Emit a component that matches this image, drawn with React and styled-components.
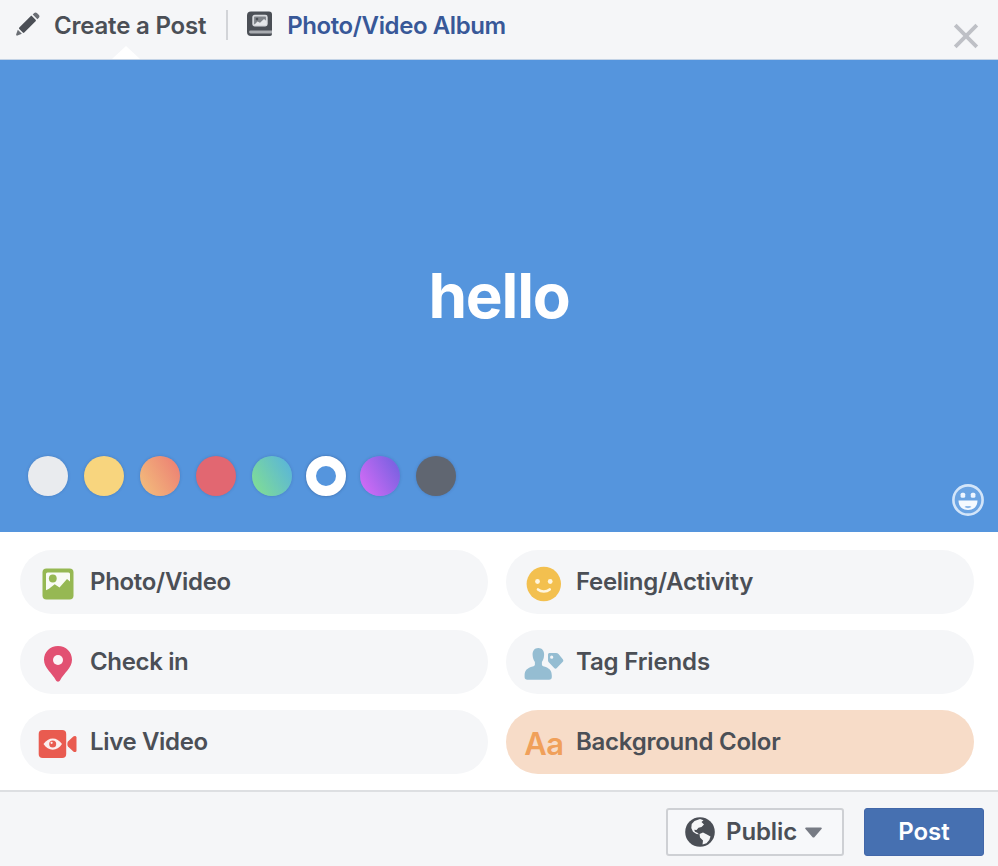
import React, { useState } from "react";
import styled, { createGlobalStyle } from "styled-components";

const GlobalStyle = createGlobalStyle`
  * {
    box-sizing: border-box;
  }

  body {
    margin: 0;
    background: #fff;
    font-family: Inter, "Liberation Sans", sans-serif;
    color: #4b4f56;
  }

  button {
    font: inherit;
    color: inherit;
    padding: 0;
    border: 0;
    background: none;
    cursor: pointer;
  }

  svg {
    display: block;
    flex: none;
  }
`;

const Composer = styled.div`
  width: 998px;
  height: 866px;
  display: flex;
  flex-direction: column;
  overflow: hidden;
`;

const Header = styled.header`
  height: 60px;
  flex: none;
  display: flex;
  align-items: flex-start;
  padding: 0 19px 0 15px;
  background: #f5f6f8;
  border-bottom: 1px solid #c3d3e6;
`;

const Tab = styled.button`
  position: relative;
  height: 59px;
  display: flex;
  align-items: flex-start;
  gap: ${(props) => props.$gap}px;
  color: ${(props) => (props.$active ? "#4b4f56" : "#385898")};

  svg {
    margin-top: 11px;
  }
`;

const Label = styled.span`
  font-size: 24px;
  line-height: 30px;
  font-weight: 600;
  letter-spacing: ${(props) => props.$spacing || 0}px;
  white-space: nowrap;
`;

const TabLabel = styled(Label)`
  margin-top: 11px;
`;

const Notch = styled.span`
  position: absolute;
  left: 97px;
  bottom: 0;
  border: solid transparent;
  border-width: 0 14px 13px;
  border-bottom-color: #fff;
`;

const Divider = styled.div`
  width: 2px;
  height: 30px;
  margin: 10px 19px 0 20px;
  background: #d2d4d8;
`;

const Close = styled.button`
  margin: 23px 0 0 auto;
`;

const Canvas = styled.main`
  height: 472px;
  flex: none;
  display: flex;
  flex-direction: column;
  justify-content: space-between;
  background: #5595dd;
`;

const Message = styled.div`
  padding-top: 196px;
  text-align: center;
  color: #fff;
  font-size: 62px;
  line-height: 80px;
  font-weight: 700;
  letter-spacing: -1.2px;
`;

const CanvasTools = styled.div`
  display: flex;
  justify-content: space-between;
  align-items: flex-end;
  padding: 0 13px 15px 28px;
`;

const Swatches = styled.div`
  display: flex;
  gap: 16px;
  padding-bottom: 21px;
`;

const Swatch = styled.button`
  width: 40px;
  height: 40px;
  border-radius: 50%;
  margin: ${(props) => (props.$selected ? "0 -2px" : "0")};
  border: ${(props) => (props.$selected ? "10px solid #fff" : "0")};
  background: ${(props) => props.$fill};
  box-shadow: 0 0 3px rgba(40, 70, 120, ${(props) => (props.$selected ? 0.6 : 0.3)});
`;

const Options = styled.section`
  flex: 1;
  display: grid;
  grid-template-columns: 468px 468px;
  grid-auto-rows: 64px;
  gap: 16px 18px;
  padding: 18px 20px 0;
`;

const Option = styled.button`
  display: flex;
  align-items: center;
  border-radius: 32px;
  padding-left: 18px;
  background: ${(props) => (props.$active ? "#f7dcc8" : "#f5f6f8")};
`;

const OptionIcon = styled.span`
  width: 40px;
  height: 40px;
  margin: 3px 12px 0 0;
  display: flex;
  justify-content: center;
  align-items: center;
`;

const Letters = styled.span`
  color: #f0a05a;
  font-size: 31px;
  line-height: 36px;
  font-weight: 600;
  letter-spacing: -0.5px;
`;

const Footer = styled.footer`
  height: 76px;
  flex: none;
  display: flex;
  justify-content: flex-end;
  gap: 20px;
  padding: 16px 14px 0;
  background: #f5f6f8;
  border-top: 2px solid #dddfe2;
`;

const Audience = styled.button`
  width: 178px;
  height: 48px;
  display: flex;
  align-items: center;
  padding-left: 17px;
  background: #f7f8fa;
  border: 2px solid #ced0d4;
  border-radius: 3px;

  ${Label} {
    margin: 0 8px 0 11px;
  }
`;

const Submit = styled.button`
  width: 120px;
  height: 48px;
  color: #fff;
  background: #4670b1;
  border: 1px solid #4267a9;
  border-radius: 3px;
`;

const PencilIcon = () => (
  <svg width="26" height="26" viewBox="0 0 26 26" fill="#4b4f56">
    <path d="M4.300 16.500 15.600 5.200c.5-.5 1-.5 1.500 0l3.500 3.500c.5.500.5 1 0 1.500L9.300 21.500c-.5.500-1 .5-1.500 0L4.300 18c-.5-.5-.5-1 0-1.500z" />
    <path d="m17.700 3.600 1.500-1.500c.8-.8 1.900-.8 2.700 0l2 2c.8.800.8 1.900 0 2.700l-1.500 1.500z" fill="#6b6f75" />
    <path d="M2.800 18.700 6.900 22.800 2.500 24.600c-.9.3-1.600-.4-1.300-1.300z" fill="#6b6f75" />
  </svg>
);

const AlbumIcon = () => (
  <svg width="26" height="26" viewBox="0 0 26 26">
    <path d="M4 .5h18a3 3 0 0 1 3 3V23a2 2 0 0 1-2 2H4a4 4 0 0 1-4-4V4.500a4 4 0 0 1 4-4z" fill="#4b4f56" />
    <path d="M3.500 19.500H25v2.900H3.500a1.450 1.450 0 0 1 0-2.900z" fill="#a9acb1" />
    <rect x="6.200" y="4.700" width="13.600" height="9.800" rx="1.500" fill="#7e8288" stroke="#d7d9dd" strokeWidth="1.800" />
    <path d="m7 13.900 3.500-3.400 2.500 1.200 4-3.700 2.500 2v3.900z" fill="#e4e6e9" />
    <circle cx="10" cy="8.100" r="1.300" fill="#4b4f56" />
  </svg>
);

const CloseIcon = () => (
  <svg width="26" height="26" viewBox="0 0 26 26">
    <path d="m2.200 2.200 21.600 21.600M23.800 2.200 2.200 23.800" stroke="#bec0c6" strokeWidth="3.800" />
  </svg>
);

const EmojiIcon = () => (
  <svg width="34" height="34" viewBox="0 0 34 34">
    <circle cx="17" cy="17" r="14.600" fill="#6ba4e3" stroke="#d3e5f9" strokeWidth="2.600" />
    <rect x="9.600" y="9.800" width="4.600" height="5" rx="1.500" fill="#edf5ff" />
    <rect x="19.800" y="9.800" width="4.600" height="5" rx="1.500" fill="#edf5ff" />
    <path d="M7.500 17.500h19c0 5.700-3.700 9.500-9.500 9.500s-9.500-3.800-9.500-9.500z" fill="#f5faff" />
    <path d="M13.500 24c1-1.200 2.300-1.400 3.500-.7 1.200-.7 2.500-.5 3.500.7-2.100 1.500-4.900 1.500-7 0z" fill="#8bb7e9" />
  </svg>
);

const PhotoIcon = () => (
  <svg width="32" height="32" viewBox="0 0 32 32">
    <rect x=".5" y=".5" width="31" height="31" rx="4" fill="#96b853" />
    <path d="M5.500 4.500h21a1.500 1.500 0 0 1 1.500 1.500v7.500l-3-2.500-7.500 8.500-4.800-3.300L7 20.700l-3 1.500V6a1.500 1.500 0 0 1 1.500-1.500z" fill="#f9fbf5" />
    <circle cx="10.800" cy="10.500" r="3.900" fill="#96b853" />
  </svg>
);

const PinIcon = () => (
  <svg width="30" height="36" viewBox="0 0 30 36">
    <path d="M15 0C7 0 1 6 1 13.700c0 8.300 8.400 13.500 11.700 20.300 1.200 2.200 3.400 2.200 4.600 0C20.600 27.200 29 22 29 13.700 29 6 23 0 15 0z" fill="#e25072" />
    <circle cx="15" cy="14" r="5" fill="#fbf4f7" />
  </svg>
);

const LiveIcon = () => (
  <svg width="40" height="28" viewBox="0 0 40 28">
    <rect x=".7" y="0" width="27.500" height="28" rx="4" fill="#e95b50" />
    <path d="m30 11.500 5.300-5c1.200-1.100 3.200-.6 3.200 1v13c0 1.600-2 2.100-3.200 1l-5.300-5c-.9-1-.9-4 0-5z" fill="#e95b50" />
    <path d="M5.500 14c4.800-7.500 13.700-7.500 18.500 0-4.800 7.500-13.700 7.500-18.500 0z" fill="#fbefef" />
    <circle cx="14.700" cy="14" r="3.500" fill="#e95b50" />
    <circle cx="13.600" cy="12.800" r="1.100" fill="#fbefef" />
  </svg>
);

const SmileIcon = () => (
  <svg width="36" height="36" viewBox="0 0 36 36">
    <circle cx="17.800" cy="18" r="17.200" fill="#f3c04f" />
    <circle cx="11.500" cy="15.500" r="2.400" fill="#fff6df" />
    <circle cx="24.200" cy="15.500" r="2.400" fill="#fff6df" />
    <path d="M12 23.400c3.200 2.700 8.500 2.700 11.700 0" fill="none" stroke="#fff6df" strokeWidth="2.600" strokeLinecap="round" />
  </svg>
);

const TagIcon = () => (
  <svg width="40" height="34" viewBox="0 0 40 34" fill="#95bdd2">
    <path d="M14.300 1c-3.700 0-6 2.800-5.700 7 .2 3.200 1 5.200 2.300 7v2.500c0 1-.9 1.600-2.200 2C3.300 21 .6 23.300.6 28.500V30c0 1.800 1 2.700 2.700 2.700h21.800c1.700 0 2.700-.9 2.700-2.700v-1.500c0-5.200-2.700-7.500-7.700-9-1.300-.4-2.200-1-2.200-2V15c1.300-1.800 2-3.800 2.200-7 .3-4.200-2-7-5.800-7z" />
    <path fillRule="evenodd" d="M25.700 6h6.400c1 0 1.700.3 2.400 1l4.300 5.300c.7.900.7 1.700 0 2.500l-6 6.300c-.8.8-1.800.8-2.600 0L25 15.600c-.7-.7-1-1.400-1-2.400V7.700c0-1 .7-1.700 1.700-1.700zm2 2.600a1.600 1.600 0 1 0 0 3.200 1.600 1.600 0 0 0 0-3.200z" />
  </svg>
);

const GlobeIcon = () => (
  <svg width="30" height="30" viewBox="0 0 30 30">
    <circle cx="15" cy="15" r="14.800" fill="#4b4f56" />
    <path d="M9.500 4 15 2l3.500 1.300-2 1.700 2.500 2.500-2.500 2.500-3 .7-2 2.300-2.300-.2.800 2 2.300 1 1.700 1.500-2.500-.3-3.500-2.200L6.300 11l.4-4z" fill="#f5f6f8" />
    <path d="m14.500 17 3.500-1.500 3.500 1.700 4 2.300-1.200 3.500-2.800 3.200-4 1.300.5-4-3-3z" fill="#f5f6f8" />
  </svg>
);

const CaretIcon = () => (
  <svg width="17" height="11" viewBox="0 0 17 11">
    <path d="M1.200.5h14.600c1 0 1.300.9.700 1.600L9.600 9.900c-.6.700-1.600.7-2.200 0L.5 2.100C-.1 1.400.2.500 1.200.5z" fill="#777b84" />
  </svg>
);

const swatches = [
  "#e9ebee",
  "#f8d57e",
  "linear-gradient(60deg, #f3c17c, #ec7b73)",
  "#e26771",
  "linear-gradient(60deg, #84e18e, #56b1e0)",
  "#5595dd",
  "linear-gradient(60deg, #dc6cf8, #6d60de)",
  "#606671",
];

const options = [
  { name: "Photo/Video", icon: <PhotoIcon />, spacing: -0.32 },
  { name: "Feeling/Activity", icon: <SmileIcon />, spacing: -0.3 },
  { name: "Check in", icon: <PinIcon />, spacing: -0.35 },
  { name: "Tag Friends", icon: <TagIcon />, spacing: -0.15 },
  { name: "Live Video", icon: <LiveIcon />, spacing: -0.35 },
  { name: "Background Color", icon: <Letters>Aa</Letters>, spacing: -0.25 },
];

export default () => {
  const [swatch, setSwatch] = useState(5);
  const [option, setOption] = useState("Background Color");

  return (
    <Composer>
      <GlobalStyle />
      <Header>
        <Tab $active $gap={13}>
          <PencilIcon />
          <TabLabel $spacing={-0.2}>Create a Post</TabLabel>
          <Notch />
        </Tab>
        <Divider />
        <Tab $gap={14}>
          <AlbumIcon />
          <TabLabel $spacing={-0.4}>Photo/Video Album</TabLabel>
        </Tab>
        <Close aria-label="Close">
          <CloseIcon />
        </Close>
      </Header>

      <Canvas>
        <Message>hello</Message>
        <CanvasTools>
          <Swatches>
            {swatches.map((fill, i) => (
              <Swatch key={fill} $fill={fill} $selected={i === swatch} onClick={() => setSwatch(i)} />
            ))}
          </Swatches>
          <EmojiIcon />
        </CanvasTools>
      </Canvas>

      <Options>
        {options.map(({ name, icon, spacing }) => (
          <Option key={name} $active={name === option} onClick={() => setOption(name)}>
            <OptionIcon>{icon}</OptionIcon>
            <Label $spacing={spacing}>{name}</Label>
          </Option>
        ))}
      </Options>

      <Footer>
        <Audience>
          <GlobeIcon />
          <Label $spacing={-0.1}>Public</Label>
          <CaretIcon />
        </Audience>
        <Submit>
          <Label>Post</Label>
        </Submit>
      </Footer>
    </Composer>
  );
};
